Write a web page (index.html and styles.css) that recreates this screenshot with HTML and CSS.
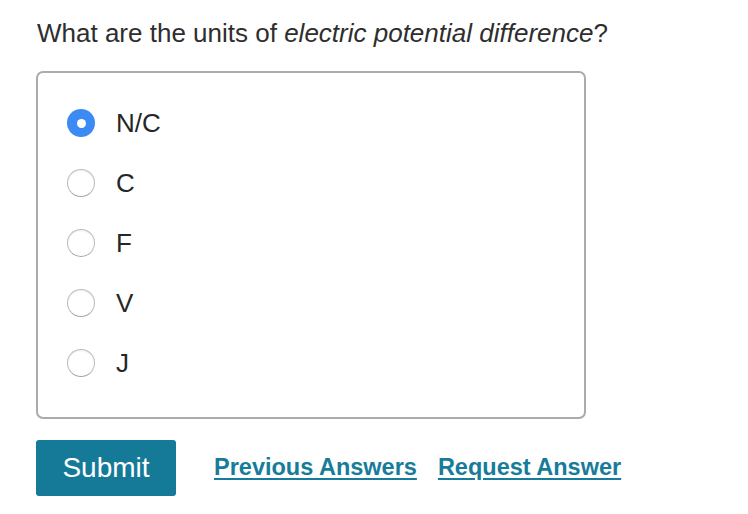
FILE: index.html
```html
<!DOCTYPE html>
<html>
<head>
<meta charset="utf-8">
<link rel="stylesheet" href="styles.css">
</head>
<body>
<div class="page">
  <p class="question">What are the units of <em>electric potential difference</em>?</p>
  <div class="choices">
    <label class="choice"><span class="radio checked"></span><span class="text">N/C</span></label>
    <label class="choice"><span class="radio"></span><span class="text">C</span></label>
    <label class="choice"><span class="radio"></span><span class="text">F</span></label>
    <label class="choice"><span class="radio"></span><span class="text">V</span></label>
    <label class="choice"><span class="radio"></span><span class="text">J</span></label>
  </div>
  <div class="actions">
    <button class="submit">Submit</button>
    <a class="link" href="#">Previous Answers</a>
    <a class="link" href="#">Request Answer</a>
  </div>
</div>
</body>
</html>
```
FILE: styles.css
```css
html, body {
  margin: 0;
  padding: 0;
  background: #fff;
}
.page {
  padding: 18px 0 0 36px;
  font-family: "Liberation Sans", Arial, Helvetica, sans-serif;
  color: #2e2e2e;
}
.question {
  margin: 0 0 0 1px;
  font-size: 26px;
  line-height: 30px;
}
.question em {
  font-style: italic;
}
.choices {
  margin-top: 23px;
  box-sizing: border-box;
  width: 550px;
  height: 348px;
  border: 2px solid #ababab;
  border-radius: 7px;
  padding: 36px 0 0 29px;
  display: flex;
  flex-direction: column;
  gap: 32px;
}
.choice {
  display: flex;
  align-items: center;
  height: 28px;
}
.radio {
  box-sizing: border-box;
  width: 28px;
  height: 28px;
  border-radius: 50%;
  border: 1px solid #bdbdbd;
  border-bottom-color: #a4a4a4;
  background: #fff;
  box-shadow: inset 0 1px 2px rgba(0,0,0,0.06);
  display: flex;
  align-items: center;
  justify-content: center;
}
.radio.checked {
  border: none;
  box-shadow: none;
  background: #3c8bf5;
}
.radio.checked::after {
  content: "";
  width: 9px;
  height: 9px;
  border-radius: 50%;
  background: #fff;
}
.text {
  margin-left: 21px;
  font-size: 26px;
  color: #262626;
}
.actions {
  margin-top: 21px;
  display: flex;
  align-items: center;
}
.submit {
  width: 140px;
  height: 56px;
  border: none;
  border-radius: 3px;
  background: #157a98;
  color: #fff;
  font-family: "Liberation Sans", Arial, Helvetica, sans-serif;
  font-size: 28px;
  padding: 0;
  margin-right: 38px;
}
.link {
  font-size: 23.5px;
  font-weight: bold;
  color: #167c9a;
  text-decoration: underline;
  text-decoration-thickness: 2px;
  text-underline-offset: 3px;
  margin-right: 21px;
  margin-top: -2px;
}
```
